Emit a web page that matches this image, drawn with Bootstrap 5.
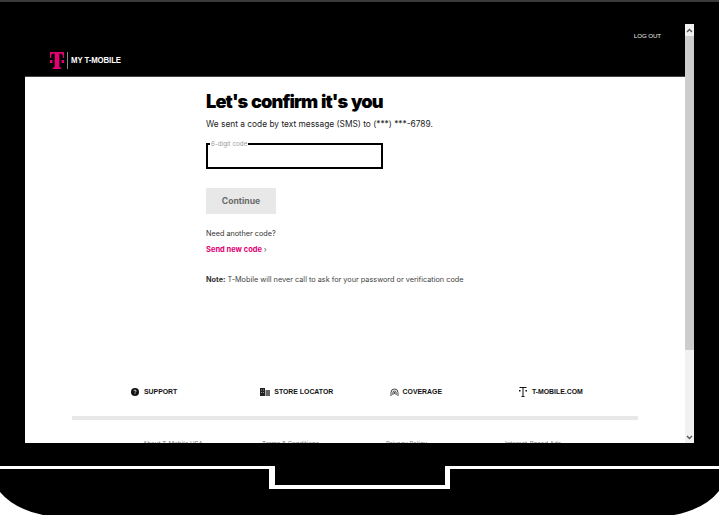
<!DOCTYPE html>
<html lang="en">
<head>
  <meta charset="UTF-8" />
  <meta name="viewport" content="width=device-width, initial-scale=1" />
  <title>Let's confirm it's you</title>
  <link href="https://cdn.jsdelivr.net/npm/bootstrap@5.3.2/dist/css/bootstrap.min.css" rel="stylesheet" />
  <style>
    html, body { margin: 0; background: #000; overflow: hidden; }
    body { font-family: Inter, "Liberation Sans", sans-serif; color: #333; }
    .bezel { width: 719px; height: 515px; background: #000; border-top: 2px solid #3a3a3a; }
    .screen { width: 669px; height: 419px; margin: 22px 0 0 25px; }
    .view { width: 660px; height: 419px; overflow: hidden; background: #fff; }
    .top-head { height: 53px; background: #000; border-bottom: 1px solid #444; padding: 28px 24px 0 25px; }
    .brand-name { font: 700 8.4px/1 "Liberation Sans", sans-serif; color: #fff; transform: scaleX(.93); transform-origin: left; letter-spacing: -.1px; white-space: nowrap; }
    .brand-bar { width: 1px; height: 17px; background: #8a8a8a; margin: 0 3px 0 3px; }
    .logout { font: 400 6.2px/1 "Liberation Sans", sans-serif; letter-spacing: -.1px; color: #eee; margin-top: -19px; text-decoration: none; }
    .form-col { padding: 13px 0 0 181px; }
    .title-text { font-family: Inter, sans-serif; font-weight: 900; font-size: 18.2px; line-height: 22px; color: #000; margin: 0 0 5px; letter-spacing: -.9px; word-spacing: 1px; }
    .sent-text { font-size: 8.35px; line-height: 14px; color: #222; margin: 0 0 12px; }
    .code-box { position: relative; width: 177px; height: 26px; margin-bottom: 19px; }
    .code-input { display: block; width: 177px; height: 26px; border: 2px solid #000; background: #fff; outline: 0; padding: 0 6px; }
    .code-label { position: absolute; left: 4px; top: -3px; padding: 0 1px; background: #fff; font-size: 6.3px; line-height: 8px; color: #9a9a9a; }
    .btn.go-btn { display: block; width: 70px; height: 26px; padding: 0; border: 0; border-radius: 0; background: #e8e8e8; color: #6a6a6a; font-size: 8.6px; font-weight: 700; opacity: 1; margin-bottom: 14px; }
    .more-text { font-size: 7.25px; line-height: 12px; color: #333; margin: 0 0 4px; }
    .send-link { display: block; font-size: 7.5px; font-weight: 700; line-height: 12px; color: #e20074; text-decoration: none; margin-bottom: 18px; }
    .send-link span { font-weight: 400; color: #555; }
    .note-text { font-size: 7.3px; line-height: 12px; color: #444; margin: 0; }
    .note-text strong { color: #333; }
    .foot-nav { margin-top: 100px; padding-left: 106px; height: 12px; }
    .foot-item { width: 129.3px; gap: 5px; font: 700 6.9px/12px "Liberation Sans", sans-serif; color: #111; text-decoration: none; }
    .foot-item-tight { gap: 4px; }
    .foot-line { height: 4px; width: 566px; margin: 18px 0 0 47px; background: #e8e8e8; }
    .foot-links { padding: 19px 0 0 118px; }
    .foot-links a { font-size: 6.2px; line-height: 10px; color: #777; text-decoration: none; }
    .scroll-rail { width: 9px; height: 419px; background: #f1f1f1; }
    .scroll-btn { height: 12px; }
    .scroll-thumb { height: 314px; background: #cdcdcd; }
    .base { display: block; }
  </style>
</head>
<body>
  <div class="bezel">
    <div class="screen d-flex">
      <div class="view">
        <header class="top-head d-flex justify-content-between">
          <div class="d-flex align-items-center align-self-start">
            <svg width="14" height="17" viewBox="0 0 17 17" preserveAspectRatio="none" aria-hidden="true">
              <g fill="#e20074">
                <path d="M0 0h17v6h-1.2v-.6c0-2.5-1.2-4-3.6-4h-.9v12.3c0 1.3.5 1.8 1.6 1.8h.7V17H3.4v-1.5h.7c1.1 0 1.6-.5 1.6-1.8V1.4h-.9C2.4 1.4 1.2 2.9 1.2 5.4V6H0z"/>
                <rect x="0" y="8" width="3" height="3"/><rect x="14" y="8" width="3" height="3"/>
              </g>
            </svg>
            <span class="brand-bar"></span>
            <span class="brand-name">MY T-MOBILE</span>
          </div>
          <a class="logout" href="#">LOG OUT</a>
        </header>

        <main class="form-col">
          <h1 class="title-text">Let's confirm it's you</h1>
          <p class="sent-text">We sent a code by text message (SMS) to (***) ***-6789.</p>
          <div class="code-box">
            <input class="code-input" type="text" id="code" />
            <label class="code-label" for="code">6-digit code</label>
          </div>
          <button class="btn go-btn" type="button" disabled>Continue</button>
          <p class="more-text">Need another code?</p>
          <a class="send-link" href="#">Send new code <span>›</span></a>
          <p class="note-text"><strong>Note:</strong> T-Mobile will never call to ask for your password or verification code</p>
        </main>

        <footer>
          <nav class="foot-nav d-flex">
            <a class="foot-item d-flex align-items-center" href="#">
              <svg width="8" height="8" viewBox="0 0 8 8" aria-hidden="true"><circle cx="4" cy="4" r="4" fill="#111"/><path d="M2.9 3.1c0-1.4 2.2-1.4 2.2 0 0 .8-1.1.8-1.1 1.6" fill="none" stroke="#fff" stroke-width=".8"/><rect x="3.6" y="5.4" width=".8" height=".8" fill="#fff"/></svg>
              SUPPORT
            </a>
            <a class="foot-item foot-item-tight d-flex align-items-center" href="#">
              <svg width="10" height="8" viewBox="0 0 10 8" aria-hidden="true"><path d="M0 0h5v8H0z" fill="#222"/><path d="M5.5 2H10v6H5.5z" fill="#666"/><path d="M1 1.5h1v1H1zm2 0h1v1H3zM1 4h1v1H1zm2 0h1v1H3z" fill="#999"/></svg>
              STORE LOCATOR
            </a>
            <a class="foot-item foot-item-tight d-flex align-items-center" href="#">
              <svg width="9" height="9" viewBox="0 0 9 9" aria-hidden="true"><g fill="none" stroke="#444" stroke-width="1"><path d="M1 8V4.5a3.5 3.5 0 0 1 7 0V8"/><path d="M2.9 7V4.6a1.6 1.6 0 0 1 3.2 0V7"/></g><circle cx="4.5" cy="5" r=".9" fill="#444"/></svg>
              COVERAGE
            </a>
            <a class="foot-item d-flex align-items-center" href="#">
              <svg width="8" height="10" viewBox="0 0 8 10" aria-hidden="true"><path d="M.5 0h7v1h-3v8h1v1h-3V9h1V1h-3z" fill="#111"/><rect x="0" y="3" width="1.5" height="1.5" fill="#111"/><rect x="6.5" y="3" width="1.5" height="1.5" fill="#111"/></svg>
              T-MOBILE.COM
            </a>
          </nav>
          <div class="foot-line"></div>
          <div class="foot-links d-flex">
            <a class="d-block" style="width:119px" href="#">About T-Mobile USA</a>
            <a class="d-block" style="width:124px" href="#">Terms &amp; Conditions</a>
            <a class="d-block" style="width:119px" href="#">Privacy Policy</a>
            <a class="d-block" href="#">Interest-Based Ads</a>
          </div>
        </footer>
      </div>

      <div class="scroll-rail">
        <div class="scroll-btn d-flex justify-content-center align-items-center">
          <svg width="7" height="5" viewBox="0 0 7 5" aria-hidden="true"><path d="M1 4l2.5-2.5L6 4" fill="none" stroke="#555" stroke-width="1.4"/></svg>
        </div>
        <div class="scroll-thumb"></div>
        <div class="d-flex justify-content-center align-items-center" style="height:93px;padding-top:81px">
          <svg width="7" height="5" viewBox="0 0 7 5" aria-hidden="true"><path d="M1 1l2.5 2.5L6 1" fill="none" stroke="#555" stroke-width="1.4"/></svg>
        </div>
      </div>
    </div>

    <svg class="base" width="719" height="72" viewBox="0 443 719 72" aria-hidden="true">
      <path d="M0 466H275V485H445V466H719V469H450V489H269V469H0z" fill="#fff"/>
      <path d="M0 492Q14 509 43 515H0zM719 491Q705 509 674 515H719z" fill="#fff"/>
    </svg>
  </div>

  <script src="https://cdn.jsdelivr.net/npm/bootstrap@5.3.2/dist/js/bootstrap.bundle.min.js"></script>
</body>
</html>
